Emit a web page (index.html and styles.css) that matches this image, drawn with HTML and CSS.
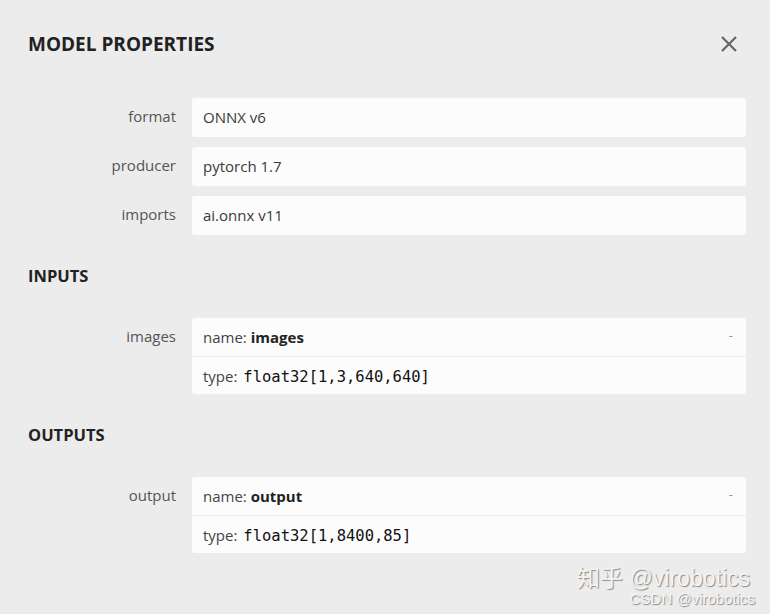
FILE: index.html
```html
<!DOCTYPE html>
<html lang="en">
<head>
    <meta charset="UTF-8">
    <title>Model Properties</title>
    <link rel="stylesheet" href="styles.css">
</head>
<body>
    <div class="sidebar">
        <div class="sidebar-header">
            <div class="sidebar-title">MODEL PROPERTIES</div>
            <div class="sidebar-close">
                <svg width="16" height="16" viewBox="0 0 16 16">
                    <path d="M1 1 L15 15 M15 1 L1 15" stroke="#666" stroke-width="2.2" fill="none"/>
                </svg>
            </div>
        </div>

        <!-- general properties -->
        <div class="prop-list">
            <div class="prop-row">
                <div class="prop-name">format</div>
                <div class="prop-value">ONNX v6</div>
            </div>
            <div class="prop-row">
                <div class="prop-name">producer</div>
                <div class="prop-value">pytorch 1.7</div>
            </div>
            <div class="prop-row">
                <div class="prop-name">imports</div>
                <div class="prop-value">ai.onnx v11</div>
            </div>
        </div>

        <div class="section-title">INPUTS</div>
        <div class="prop-list">
            <div class="prop-row">
                <div class="prop-name">images</div>
                <div class="prop-box">
                    <div class="box-line">name: <b>images</b><span class="box-toggle">-</span></div>
                    <div class="box-line">type: <code>float32[1,3,640,640]</code></div>
                </div>
            </div>
        </div>

        <div class="section-title">OUTPUTS</div>
        <div class="prop-list">
            <div class="prop-row">
                <div class="prop-name">output</div>
                <div class="prop-box">
                    <div class="box-line">name: <b>output</b><span class="box-toggle">-</span></div>
                    <div class="box-line">type: <code>float32[1,8400,85]</code></div>
                </div>
            </div>
        </div>
    </div>

    <div class="watermark">
        <div class="wm-main">知乎 @virobotics</div>
        <div class="wm-sub">CSDN @virobotics</div>
    </div>
</body>
</html>
```

FILE: styles.css
```css
* {
    margin: 0;
    padding: 0;
    box-sizing: border-box;
}
body {
    background: #ececec;
    font-family: 'Open Sans', 'Noto Sans', sans-serif;
    color: #333;
    height: 614px;
    overflow: hidden;
    position: relative;
}
.sidebar {
    padding: 24px 24px 0 28px;
}
.sidebar-header {
    display: flex;
    justify-content: space-between;
    align-items: center;
    height: 40px;
}
.sidebar-title {
    font-size: 19px;
    font-weight: 700;
    color: #222;
}
.sidebar-close {
    width: 16px;
    height: 16px;
    margin-right: 9px;
    display: flex;
}
.prop-list {
    display: flex;
    flex-direction: column;
    gap: 10px;
    margin-top: 34px;
}
.section-title + .prop-list {
    margin-top: 30px;
}
.prop-row {
    display: grid;
    grid-template-columns: 148px 1fr;
    column-gap: 16px;
}
.prop-name {
    text-align: right;
    font-size: 15px;
    color: #555;
    line-height: 19px;
    padding-top: 9px;
}
.prop-value {
    background: #fcfcfc;
    border-radius: 3px;
    height: 39px;
    padding: 0 11px;
    font-size: 15px;
    line-height: 39px;
    color: #3a3a3a;
}
.section-title {
    font-size: 16.5px;
    font-weight: 700;
    color: #222;
    line-height: 24px;
    margin-top: 29px;
}
.prop-box {
    background: #fcfcfc;
    border-radius: 3px;
}
.box-line {
    height: 38px;
    line-height: 38px;
    padding: 0 11px;
    font-size: 15px;
    color: #444;
    position: relative;
}
.box-line + .box-line {
    border-top: 1px solid #ececec;
}
.box-line b {
    color: #222;
}
.box-line code {
    font-family: 'DejaVu Sans Mono', monospace;
    font-size: 15.5px;
    color: #111;
    margin-left: 2px;
}
.box-toggle {
    position: absolute;
    right: 13px;
    top: -2px;
    color: #999;
    font-size: 13px;
}
.watermark {
    position: absolute;
    right: 15px;
    bottom: 8px;
    text-align: right;
    color: #f4f4f4;
    text-shadow: 1px 1px 1px #888;
    font-family: 'Liberation Sans', 'Noto Sans CJK SC', sans-serif;
}
.wm-main {
    font-size: 23px;
    line-height: 23px;
    margin-right: 5px;
    margin-bottom: 1px;
}
.wm-sub {
    font-size: 15px;
    line-height: 15px;
}
```
